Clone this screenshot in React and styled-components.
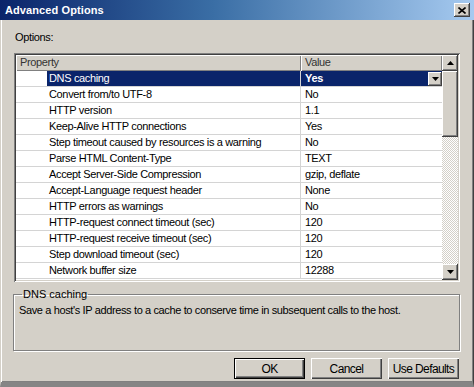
import React from 'react'
import styled, { createGlobalStyle } from 'styled-components'

const GlobalStyle = createGlobalStyle`
  html, body {
    margin: 0;
    padding: 0;
    background: #d4d0c8;
  }
  * {
    box-sizing: border-box;
  }
`

const rows = [
  ['DNS caching', 'Yes'],
  ['Convert from/to UTF-8', 'No'],
  ['HTTP version', '1.1'],
  ['Keep-Alive HTTP connections', 'Yes'],
  ['Step timeout caused by resources is a warning', 'No'],
  ['Parse HTML Content-Type', 'TEXT'],
  ['Accept Server-Side Compression', 'gzip, deflate'],
  ['Accept-Language request header', 'None'],
  ['HTTP errors as warnings', 'No'],
  ['HTTP-request connect timeout (sec)', '120'],
  ['HTTP-request receive timeout (sec)', '120'],
  ['Step download timeout (sec)', '120'],
  ['Network buffer size', '12288'],
]

function Arrow({ up }) {
  return (
    <svg width="7" height="4" viewBox="0 0 7 4">
      {up ? <polygon points="3.5,0 7,4 0,4" fill="#000" /> : <polygon points="0,0 7,0 3.5,4" fill="#000" />}
    </svg>
  )
}

function App() {
  return (
    <>
      <GlobalStyle />
      <Window>
        <TitleBar>
          <Title>Advanced Options</Title>
          <CloseButton>
            <svg width="8" height="7" viewBox="0 0 8 7">
              <path d="M0.5 0.5 L7.5 6.5 M7.5 0.5 L0.5 6.5" stroke="#000" strokeWidth="1.6" />
            </svg>
          </CloseButton>
        </TitleBar>
        <Frame>
          <OptionsLabel>Options:</OptionsLabel>
          <ListBox>
            <Table>
              <HeaderRow>
                <HeaderCell>Property</HeaderCell>
                <HeaderCell>Value</HeaderCell>
              </HeaderRow>
              {rows.map(([name, value], i) => (
                <Row key={name}>
                  <Gutter />
                  <PropCell selected={i === 0}>{name}</PropCell>
                  <ValueCell selected={i === 0}>
                    <span>{value}</span>
                    {i === 0 && (
                      <DropButton>
                        <Arrow />
                      </DropButton>
                    )}
                  </ValueCell>
                </Row>
              ))}
            </Table>
            <ScrollBar>
              <ScrollButton>
                <Arrow up />
              </ScrollButton>
              <Thumb />
              <Track />
              <ScrollButton>
                <Arrow />
              </ScrollButton>
            </ScrollBar>
          </ListBox>
          <GroupBox>
            <Legend>DNS caching</Legend>
            <Description>Save a host's IP address to a cache to conserve time in subsequent calls to the host.</Description>
          </GroupBox>
          <ButtonRow>
            <Button isDefault>OK</Button>
            <Button>Cancel</Button>
            <Button>Use Defaults</Button>
          </ButtonRow>
        </Frame>
      </Window>
    </>
  )
}

export default App

const Window = styled.div`
  width: 474px;
  height: 387px;
  display: flex;
  flex-direction: column;
  background: #d4d0c8;
  font-family: 'Liberation Sans', Arial, sans-serif;
  font-size: 11px;
  letter-spacing: -0.35px;
  color: #000;
`

const TitleBar = styled.div`
  height: 20px;
  flex: none;
  display: flex;
  align-items: center;
  justify-content: space-between;
  padding: 0 5px 0 5px;
  background: linear-gradient(to right, #0a246a 0%, #3a6ea5 45%, #a6caf0 100%);
`

const Title = styled.div`
  color: #fff;
  font-family: 'Liberation Sans', Arial, sans-serif;
  font-weight: bold;
  font-size: 11px;
  letter-spacing: 0.1px;
`

const CloseButton = styled.div`
  width: 16px;
  height: 14px;
  margin-right: -1px;
  display: flex;
  align-items: center;
  justify-content: center;
  background: #d4d0c8;
  box-shadow: inset -1px -1px #404040, inset 1px 1px #fff, inset -2px -2px #808080;
`

const Frame = styled.div`
  flex: 1;
  display: flex;
  flex-direction: column;
  padding: 0 13px 0 13px;
  border-style: solid;
  border-width: 0 1px 5px 1px;
  border-color: #d4d0c8 #404040 #858585 #d4d0c8;
  box-shadow: inset 1px 0 #fff, inset -1px -1px #808080;
`

const OptionsLabel = styled.div`
  margin: 11px 0 0 1px;
  height: 13px;
  line-height: 13px;
`

const ListBox = styled.div`
  margin-top: 9px;
  height: 229px;
  display: flex;
  padding: 2px;
  background: #fff;
  box-shadow: inset 1px 1px #808080, inset -1px -1px #fff, inset 2px 2px #404040, inset -2px -2px #d4d0c8;
`

const Table = styled.div`
  flex: 1;
  display: flex;
  flex-direction: column;
`

const HeaderRow = styled.div`
  display: grid;
  grid-template-columns: 285px 1fr;
  height: 16px;
`

const HeaderCell = styled.div`
  background: #d4d0c8;
  color: #333;
  padding-left: 4px;
  line-height: 15px;
  box-shadow: inset 1px 1px #fff, inset -1px -1px #808080;
`

const Row = styled.div`
  display: grid;
  grid-template-columns: 31px 254px 1fr;
  height: 16px;
  border-bottom: 1px solid #d4d4d4;
`

const Gutter = styled.div``

const PropCell = styled.div`
  padding-left: 2px;
  line-height: 15px;
  white-space: nowrap;
  overflow: hidden;
  border-right: 1px solid #d4d4d4;
  background: ${(p) => (p.selected ? '#0a246a' : 'transparent')};
  color: ${(p) => (p.selected ? '#fff' : '#000')};
`

const ValueCell = styled.div`
  display: flex;
  align-items: center;
  justify-content: space-between;
  padding-left: 4px;
  line-height: 15px;
  background: ${(p) => (p.selected ? '#0a246a' : 'transparent')};
  color: ${(p) => (p.selected ? '#fff' : '#000')};
  font-weight: ${(p) => (p.selected ? 'bold' : 'normal')};
`

const DropButton = styled.div`
  width: 14px;
  height: 14px;
  display: flex;
  align-items: center;
  justify-content: center;
  background: #d4d0c8;
  box-shadow: inset -1px -1px #404040, inset 1px 1px #fff, inset -2px -2px #808080;
`

const ScrollBar = styled.div`
  width: 16px;
  display: flex;
  flex-direction: column;
`

const ScrollButton = styled.div`
  height: 16px;
  flex: none;
  display: flex;
  align-items: center;
  justify-content: center;
  background: #d4d0c8;
  box-shadow: inset -1px -1px #404040, inset 1px 1px #fff, inset -2px -2px #808080;
`

const Thumb = styled.div`
  height: 66px;
  flex: none;
  background: #d4d0c8;
  box-shadow: inset -1px -1px #404040, inset 1px 1px #fff, inset -2px -2px #808080;
`

const Track = styled.div`
  flex: 1;
  background-color: #fff;
  background-image: repeating-conic-gradient(#d4d0c8 0 25%, #fff 0 50%);
  background-size: 2px 2px;
`

const GroupBox = styled.fieldset`
  margin: 6px 0 0 -1px;
  height: 63px;
  padding: 0 5px;
  border: 1px solid #808080;
  box-shadow: 1px 1px #fff, inset 1px 1px #fff;
`

const Legend = styled.legend`
  padding: 0 1px;
  margin-left: 3px;
  font-size: 11px;
  letter-spacing: 0;
  font-family: 'Liberation Sans', Arial, sans-serif;
`

const Description = styled.div`
  font-size: 11px;
  line-height: 13px;
  margin-top: 4px;
  letter-spacing: -0.37px;
`

const ButtonRow = styled.div`
  margin-top: 7px;
  display: flex;
  justify-content: flex-end;
  gap: 6px;
  margin-right: 1px;
`

const Button = styled.div`
  width: 71px;
  height: 21px;
  display: flex;
  align-items: center;
  justify-content: center;
  font-size: 12px;
  letter-spacing: -0.6px;
  background: #d4d0c8;
  box-shadow: ${(p) =>
    p.isDefault
      ? 'inset 1px 1px #000, inset -1px -1px #000, inset 2px 2px #fff, inset -2px -2px #404040, inset -3px -3px #808080'
      : 'inset 1px 1px #fff, inset -1px -1px #404040, inset -2px -2px #808080'};
`
